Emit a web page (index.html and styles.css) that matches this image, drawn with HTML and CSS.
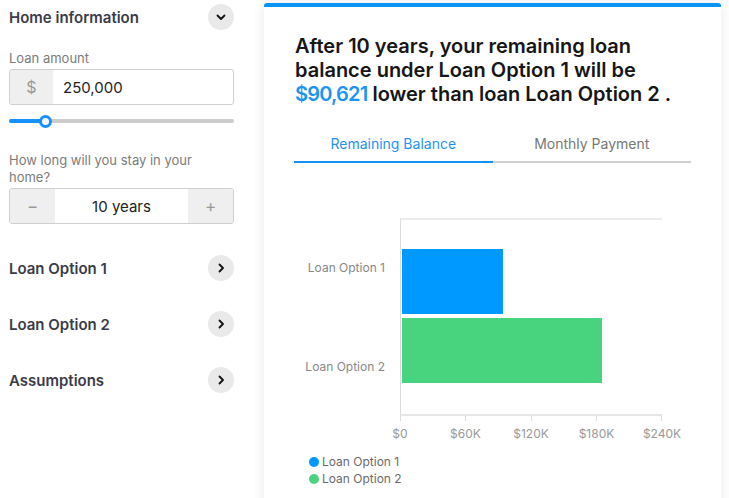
FILE: index.html
```html
<!DOCTYPE html>
<html>
<head>
<meta charset="utf-8">
<link rel="stylesheet" href="styles.css">
</head>
<body>
<aside class="panel">
  <div class="section-head">
    <span class="section-title">Home information</span>
    <span class="circle-btn"><svg width="12" height="12" viewBox="0 0 12 12"><path d="M2.5 4.5 L6 8 L9.5 4.5" fill="none" stroke="#111" stroke-width="1.8" stroke-linecap="round" stroke-linejoin="round"/></svg></span>
  </div>
  <div class="field-label first">Loan amount</div>
  <div class="input-group">
    <span class="addon">$</span>
    <span class="input-value">250,000</span>
  </div>
  <div class="slider">
    <div class="track"><div class="fill" style="width:36px"></div></div>
    <div class="thumb" style="left:30px"></div>
  </div>
  <div class="field-label question">How long will you stay in your home?</div>
  <div class="stepper">
    <span class="step-btn">&minus;</span>
    <span class="step-value">10 years</span>
    <span class="step-btn">+</span>
  </div>
  <div class="collapsed">
    <div class="section-head">
      <span class="section-title">Loan Option 1</span>
      <span class="circle-btn"><svg width="12" height="12" viewBox="0 0 12 12"><path d="M4.5 2.5 L8 6 L4.5 9.5" fill="none" stroke="#111" stroke-width="1.8" stroke-linecap="round" stroke-linejoin="round"/></svg></span>
    </div>
    <div class="section-head">
      <span class="section-title">Loan Option 2</span>
      <span class="circle-btn"><svg width="12" height="12" viewBox="0 0 12 12"><path d="M4.5 2.5 L8 6 L4.5 9.5" fill="none" stroke="#111" stroke-width="1.8" stroke-linecap="round" stroke-linejoin="round"/></svg></span>
    </div>
    <div class="section-head">
      <span class="section-title">Assumptions</span>
      <span class="circle-btn"><svg width="12" height="12" viewBox="0 0 12 12"><path d="M4.5 2.5 L8 6 L4.5 9.5" fill="none" stroke="#111" stroke-width="1.8" stroke-linecap="round" stroke-linejoin="round"/></svg></span>
    </div>
  </div>
</aside>
<main class="card">
  <h1 class="summary">After 10 years, your remaining loan balance under Loan Option 1 will be <span class="amount">$90,621</span> lower than loan Loan Option 2 .</h1>
  <div class="tabs">
    <div class="tab active">Remaining Balance</div>
    <div class="tab">Monthly Payment</div>
  </div>
  <div class="chart">
    <div class="chart-main">
      <div class="y-labels">
        <div class="y-label">Loan Option 1</div>
        <div class="y-label">Loan Option 2</div>
      </div>
      <div class="plot">
        <div class="bar bar-blue" style="width:101px"></div>
        <div class="bar bar-green" style="width:200px"></div>
      </div>
    </div>
    <div class="x-axis">
      <div class="ticks">
        <span class="tick"></span><span class="tick"></span><span class="tick"></span><span class="tick"></span><span class="tick"></span>
      </div>
      <div class="x-labels">
        <span>$0</span><span>$60K</span><span>$120K</span><span>$180K</span><span>$240K</span>
      </div>
    </div>
    <div class="legend">
      <div class="legend-item"><span class="dot dot-blue"></span>Loan Option 1</div>
      <div class="legend-item"><span class="dot dot-green"></span>Loan Option 2</div>
    </div>
  </div>
</main>
</body>
</html>
```

FILE: styles.css
```css
* { box-sizing: border-box; }
html, body { margin: 0; padding: 0; }
body {
  font-family: Inter, "Noto Sans", sans-serif;
  background: #fff;
  display: flex;
  align-items: flex-start;
  width: 729px;
  height: 498px;
  overflow: hidden;
}
.panel {
  width: 225px;
  margin-left: 9px;
  padding-top: 4px;
  flex-shrink: 0;
}
.section-head {
  display: flex;
  justify-content: space-between;
  align-items: center;
  height: 26px;
}
.section-title {
  font-size: 15px;
  font-weight: 600;
  color: #3b3b4a;
}
.circle-btn {
  width: 26px;
  height: 26px;
  border-radius: 50%;
  background: #e9e9e9;
  display: flex;
  align-items: center;
  justify-content: center;
}
.field-label {
  font-size: 13px;
  color: #7b7b7b;
  line-height: 17px;
}
.field-label.first { margin-top: 20px; }
.input-group {
  margin-top: 2px;
  display: flex;
  height: 36px;
  border: 1px solid #cfcfcf;
  border-radius: 3px;
  overflow: hidden;
}
.addon {
  width: 43px;
  background: #efefef;
  color: #999;
  font-size: 16px;
  display: flex;
  align-items: center;
  justify-content: center;
}
.input-value {
  display: flex;
  align-items: center;
  padding-left: 10px;
  font-size: 15px;
  color: #222;
}
.slider {
  position: relative;
  height: 16px;
  margin-top: 8px;
  display: flex;
  align-items: center;
}
.track {
  width: 100%;
  height: 4px;
  border-radius: 2px;
  background: #cccccc;
}
.fill {
  height: 4px;
  border-radius: 2px;
  background: #1890ff;
}
.thumb {
  position: absolute;
  top: 2px;
  width: 13px;
  height: 13px;
  border-radius: 50%;
  border: 3.5px solid #1890ff;
  background: #fff;
}
.field-label.question { margin-top: 23px; }
.stepper {
  margin-top: 2px;
  display: flex;
  height: 36px;
  border: 1px solid #cfcfcf;
  border-radius: 3px;
  overflow: hidden;
}
.step-btn {
  width: 45px;
  background: #efefef;
  color: #999;
  font-size: 17px;
  display: flex;
  align-items: center;
  justify-content: center;
}
.step-value {
  flex: 1;
  display: flex;
  align-items: center;
  justify-content: center;
  font-size: 15px;
  color: #222;
}
.collapsed {
  margin-top: 31px;
  display: flex;
  flex-direction: column;
  gap: 30px;
}
.card {
  margin-left: 30px;
  margin-top: 3px;
  width: 457px;
  height: 520px;
  flex-shrink: 0;
  border-top: 4px solid #0a95f5;
  border-radius: 3px 3px 0 0;
  box-shadow: 0 0 14px rgba(0,0,0,0.09);
  padding: 27px 30px 0 30px;
  background: #fff;
}
.summary {
  margin: 0;
  padding-left: 1px;
  font-size: 20px;
  line-height: 24px;
  font-weight: 600;
  color: #161616;
}
.amount { color: #1a96f2; font-weight: 600; letter-spacing: -0.8px; }
.tabs {
  margin-top: 19px;
  display: flex;
}
.tab {
  flex: 1;
  text-align: center;
  font-size: 14px;
  line-height: 17px;
  padding: 10px 0 9px;
  color: #777;
  border-bottom: 2px solid #d0d0d0;
}
.tab.active {
  color: #1f93f0;
  border-bottom-color: #1290f5;
}
.chart {
  margin-top: 55px;
}
.chart-main {
  display: flex;
}
.y-labels {
  width: 91px;
  display: flex;
  flex-direction: column;
  margin-right: 15px;
}
.y-label {
  flex: 1;
  display: flex;
  align-items: center;
  justify-content: flex-end;
  font-size: 12px;
  color: #888;
}
.plot {
  width: 262px;
  height: 198px;
  border-top: 2px solid #ececec;
  border-left: 1px solid #dcdcdc;
  border-bottom: 2px solid #e6e6e6;
  padding-top: 29px;
  display: flex;
  flex-direction: column;
  gap: 4px;
}
.bar {
  height: 65px;
  margin-left: 1px;
}
.bar-blue { background: #0099ff; }
.bar-green { background: #48d47f; }
.x-axis {
  margin-left: 106px;
  width: 262px;
}
.ticks {
  display: flex;
  justify-content: space-between;
  height: 5px;
}
.tick {
  width: 1px;
  height: 5px;
  background: #dcdcdc;
}
.x-labels {
  display: flex;
  justify-content: space-between;
  margin: 5px -20px 0;
  font-size: 12px;
  color: #999;
  line-height: 15px;
}
.x-labels span {
  width: 40px;
  text-align: center;
}
.legend {
  margin-top: 12px;
  padding-left: 15px;
}
.legend-item {
  display: flex;
  align-items: center;
  font-size: 12px;
  line-height: 17px;
  color: #6a6a6a;
}
.dot {
  width: 10px;
  height: 10px;
  border-radius: 50%;
  margin-right: 3px;
}
.dot-blue { background: #0099ff; }
.dot-green { background: #48d47f; }
```
